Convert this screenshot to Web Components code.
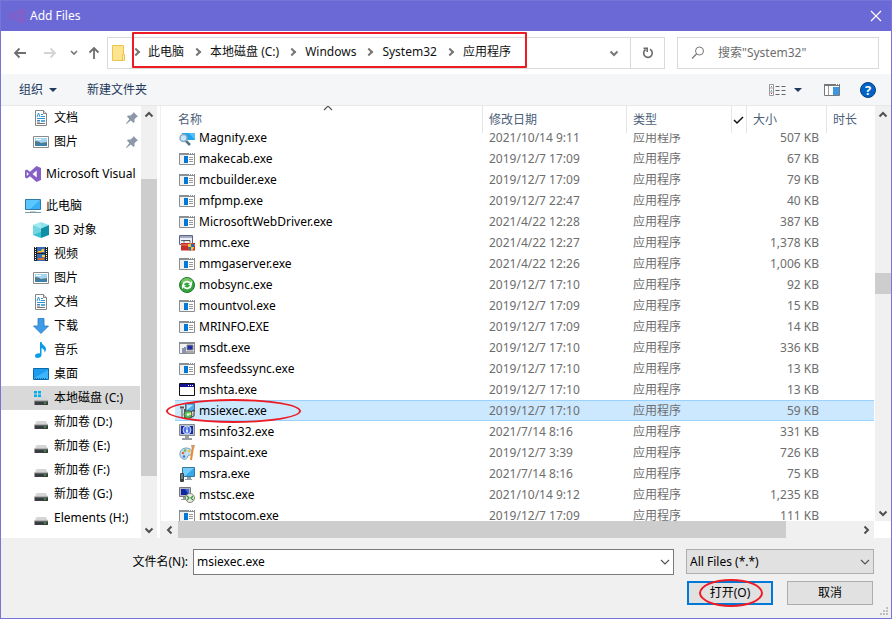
<!DOCTYPE html>
<html lang="zh-CN">
<head>
<meta charset="utf-8">
<title>Add Files</title>
<style>
  body {
    margin: 0;
    font: 12px/16px "Noto Sans", "Noto Sans CJK SC", sans-serif;
    color: #000;
  }
</style>
</head>
<body>
<file-dialog heading="Add Files">
  <address-bar slot="nav"></address-bar>
  <command-bar slot="commands"></command-bar>
  <folder-tree slot="tree"></folder-tree>
  <file-list slot="files"></file-list>
  <dialog-footer slot="footer"></dialog-footer>
</file-dialog>

<script>
const Colors = {
    accent: '#6b69d6',
    line: '#d9d9d9',
    marker: '#ed1c24',
    navy: '#1e395b',
    muted: '#6d6d6d',
};

const drive = `
  <path d="M3.500 7h9.500l2 4h-13.500z" fill="#d3d5d7"/>
  <path d="M1.500 11h13.500v4h-13.500z" fill="#3b3d40"/>
  <path d="M1.500 10.500h13.500v1h-13.500z" fill="#8b8d8f"/>
  <path d="M11 12.500h2v1h-2z" fill="#22e03a"/>`;

const monitor = `
  <path d="M.5 1.500h15v10H.5z" fill="#38b0f5" stroke="#2d7ba8"/>
  <path d="M1 2h14L5 11H1z" fill="#5cc6ff"/>`;

const Icons = {
    vs: '<path fill-rule="evenodd" fill="#865fc5" d="M11.500 0 16 2v12l-4.500 2L5 10.200 2 12.600 0 11.600V4.400l2-1 3 2.400zM11.700 4.600 7.500 8l4.200 3.400zM1.800 6v4l2.100-2z"/>',
    back: '<path d="M14 8H3M7.500 3.500 3 8l4.500 4.500" fill="none" stroke="#6e6e6e" stroke-width="1.800"/>',
    forward: '<path d="M2 8h11M8.500 3.500 13 8l-4.500 4.500" fill="none" stroke="#d4d4d4" stroke-width="1.800"/>',
    up: '<path d="M8 14V3M3.500 7.500 8 3l4.500 4.500" fill="none" stroke="#6e6e6e" stroke-width="1.800"/>',
    down: '<path d="M4.500 6.500 8 10l3.500-3.500" fill="none" stroke="currentColor" stroke-width="2"/>',
    small: '<path d="M5 6l3 3 3-3" fill="none" stroke="#777" stroke-width="1.600"/>',
    thin: '<path d="M4 6l4 4 4-4" fill="none" stroke="#555" stroke-width="1.200"/>',
    caret: '<path d="M4 6h8l-4 4z" fill="#1e395b"/>',
    close: '<path d="m3 3 10 10M13 3 3 13" stroke="#fff" stroke-width="1.200"/>',
    refresh: '<path d="M10 4.300A4.300 4.300 0 1 1 5.600 4.500M3.500 3.200h3.700v3.800" fill="none" stroke="#6b6b6b" stroke-width="1.600"/>',
    search: '<circle cx="9.500" cy="6" r="4" fill="none" stroke="#777"/><path d="M6.500 9 2 13.500" stroke="#777" stroke-width="1.200"/>',
    folder: '<path d="M2.500.5h11v15h-11z" fill="#ffe48f" stroke="#edc54c"/><path d="M12.500 9.500h2v6h-2z" fill="#fff0b8" stroke="#edc54c"/>',
    view: '<path d="M.5 2.500h4v11h-4zM.5 6h4M.5 10h4" fill="#fff" stroke="#999"/><path d="M6.500 4.500h4m2 0h4M6.500 8.500h4m2 0h4M6.500 12.500h4m2 0h4" stroke="#666"/><path d="M2 4h1v1H2zM2 8h1v1H2z" fill="#4b8fce"/><path d="M2 11h1v1H2z" fill="#d14"/>',
    pane: '<path d="M.5 2.500h15v11H.5z" fill="#fff" stroke="#777"/><path d="M0 2h16v2H0z" fill="#777"/><path d="M4.500 4v9" stroke="#999"/><path d="M9 5h6v8H9z" fill="#3c97e3"/><path d="M12 2h1v1h-1zM14 2h1v1h-1z" fill="#fff"/>',
    help: '<circle cx="8" cy="8" r="7.500" fill="#0063c6" stroke="#0a3f7d"/>',
    pin: '<path d="m9.500 2 4.500 4.500-1.200.5-2.300 2.300v2.700l-1 1-2.700-2.600L2.500 14l-.6-.6 3.500-4.200L3 6.500l1-1h2.700L9 3.200z" fill="#8c98a5"/>',
    check: '<path d="m2 8 3 3L11 5" fill="none" stroke="#111" stroke-width="1.500"/>',
    document: '<path d="M2.500.5h8l3 3v12h-11z" fill="#fff" stroke="#858585"/><path d="M10.500.5v3h3" fill="#ddd" stroke="#858585"/><path d="m4 7 1.500-4L7 7M8 4.500h2M8 6.500h4M4 8.500h8M4 10.500h3" stroke="#2b91d6" fill="none"/><path d="M8 10h4v2H8z" fill="#57a8dc"/><path d="M4 13.500h8M4 12h3" stroke="#777"/>',
    picture: '<path d="M.5 2.500h15v11H.5z" fill="#fff" stroke="#8b8b8b"/><path d="M2 4h12v8H2z" fill="#a5d4f4"/><path d="M2 7q4 0 6 2l6-1v4H2z" fill="#4e7b82"/><path d="M2 10q6-1 12 0v2H2z" fill="#3f7fae"/><path d="M3 5h5v1H3z" fill="#fff"/>',
    computer: monitor + '<path d="M5 13h6v1H5z" fill="#ccc"/><path d="M0 14.500h16" stroke="#7a9aab"/>',
    cube: '<path d="m8 0 8 3-8 3.500L0 3z" fill="#8de3ee"/><path d="m0 3 8 3.500V16l-8-3z" fill="#37bfd2"/><path d="M16 3 8 6.500V16l8-3z" fill="#0d8fa8"/><path d="m3 1.900 5-1.900v10l-8 3V3z" fill="#b7f1f5" opacity=".45"/>',
    video: '<path d="M1 1h14v14H1z" fill="#222"/><path d="M2.500 1v14M13.500 1v14" stroke="#fff" stroke-dasharray="1 1"/><path d="M4 1h8v6H4zM4 8h8v7H4z" fill="#356bbb"/><path d="M5 5h3l1-2h2v3H5z" fill="#f1cb39"/><path d="M4 6h4v1H4zM5 12h4l2-2v4H5z" fill="#d06d2f"/><path d="M9 9h3v2H9z" fill="#efd34d"/>',
    download: '<path d="M5 .5h6V8h4.500L8 15.500.5 8H5z" fill="#3d9be9" stroke="#2b78ba" stroke-width=".8"/>',
    music: '<path d="M7 0h1.500c.5 3 4.500 4 4.500 7 0 2-1 3-1.500 3.500C12 8 10.500 7 8.500 6v7c0 2-2 3-4 3S2 15 2 13.800C2 12 4.500 11 7 11.500z" fill="#0c9bea"/>',
    desktop: '<path d="M.5 2.500h15v11H.5z" fill="#1b9cf1" stroke="#086aa9"/><path d="m1 12 14-8v9H1z" fill="#3cb5fa"/><path d="M2 12.500h12" stroke="#086aa9" stroke-dasharray="1 1"/>',
    drive,
    system: drive + '<path d="M1 1h3v2.500H1zM5 1h3v2.500H5zM1 4.500h3V7H1zM5 4.500h3V7H5z" fill="#00adef"/>',
    exe: '<path d="M.5 2.500h15v11H.5z" fill="#f0f0f0" stroke="#8a8f94"/><path d="M0 2h16v2H0z" fill="#8a8f94"/><path d="M10 2.500h1m1 0h1m1 0h1" stroke="#fff"/><path d="M9 4h6v9H9z" fill="#fff"/><path d="M5 5h4v7H5z" fill="#0078d7"/><path d="M10 6.500h4M10 8.500h4M10 10.500h4" stroke="#999"/>',
    magnify: '<path d="M3 2h13v8H3z" fill="#22a1ec"/><path d="M16 2v8l-7-8z" fill="#57c2fa"/><path d="m6 10 5 5" stroke="#527489" stroke-width="2.500"/><circle cx="4.500" cy="8" r="3.500" fill="#c8e6f5" stroke="#8aabc0" stroke-width="1.500"/>',
    mmc: '<path d="M.5.5h13v9H.5z" fill="#eef0f7" stroke="#59658b"/><path d="M1 2h12M2 5.500h4" stroke="#59658b"/><path d="M5 7.500V5.500h6v2" fill="none" stroke="#555"/><path d="M2 8h14v7.500H2z" fill="#c92c24"/><path d="M2 10h14" stroke="#ef7d6b"/><path d="M9 9q3 0 3-1 0 1 3 1v4q-2 3-3 3-1 0-3-3z" fill="#f5c52d"/><path d="M12 8q0 1 3 1v3h-3zM9 12h3v4q-1 0-3-3z" fill="#2967b7"/>',
    sync: '<circle cx="8" cy="8" r="7.500" fill="#37a53f" stroke="#21762d"/><path d="M2 6a6 5 0 0 1 12 0" fill="#9bdb7d" opacity=".6"/><path d="M4 8a4 4 0 0 1 7-2M12 8a4 4 0 0 1-7 2" fill="none" stroke="#fff" stroke-width="1.800"/><path d="M13 4v4H9zM3 12V8h4z" fill="#fff"/>',
    msdt: '<path d="M.5 2.500h15v11H.5z" fill="#f3f3f3" stroke="#8a8f94"/><path d="M0 2h16v2H0z" fill="#8a8f94"/><path d="M8 5h6v5H8z" fill="#202da5" stroke="#888"/><path d="M7 11h8v2H7z" fill="#aaa"/><path d="M4 8v5m2-6v6" stroke="#67729a" stroke-width="1.500"/>',
    mshta: '<path d="M.5 1.500h15v12H.5z" fill="#fff" stroke="#111"/><path d="M1 2h14v3H1z" fill="#14148f"/><path d="M9 3.500h1m1 0h1m1 0h1" stroke="#fff"/>',
    installer: '<path d="M6.500.5h9v8h-9z" fill="#4ca9ec" stroke="#667"/><path d="M8 2h6L8 7z" fill="#b6e3ff"/><path d="M1 4.500h4M3 4v11M6 6v9" stroke="#555" stroke-width="2"/><path d="M3 5v9" stroke="#ddd"/><path d="m12 9 3-2v6l-4 2z" fill="#e7e7e7" stroke="#333"/><circle cx="9" cy="11.500" r="4" fill="#45c652" stroke="#555"/><path d="m9 11.500 3-2.500v3z" fill="#f7ed70"/><circle cx="9" cy="11.500" r="1.300" fill="#fff"/>',
    msinfo: '<path d="M.5.5h15v11H.5z" fill="#bdc1c8" stroke="#85898e"/><path d="M2 2h12v8H2z" fill="#1a2aac"/><circle cx="8" cy="6" r="4" fill="#5075dd" stroke="#cbd8ff"/><path d="M8 3.500v1m0 1v3" stroke="#fff" stroke-width="1.600"/><path d="M6 12h4v2H6zM3 14h10v2H3z" fill="#989da2"/>',
    paint: '<path d="M7 3c5 0 7 3 6 6-1 2-3 0-4 2-1 3-3 4-5 3C-1 12 0 3 7 3z" fill="#c4e1f1" stroke="#6da0bd"/><circle cx="4" cy="8" r="1.300" fill="#e6604d"/><circle cx="6" cy="5.500" r="1.300" fill="#67b553"/><circle cx="10" cy="6" r="1.300" fill="#f0bf3d"/><circle cx="5" cy="11.500" r="1.300" fill="#4971c6"/><path d="M14 2 12 15" stroke="#ef8b2b" stroke-width="2"/><path d="M12 0h4l-1 4h-2z" fill="#cc9a67"/>',
    assist: '<path d="M3.500 1.500h12v9h-12z" fill="#35a9ec" stroke="#39779a"/><path d="M4 2h11L6 10H4z" fill="#75cdfb"/><path d="M8 11h4v2H8zM6 13h7v1H6z" fill="#8ba1aa"/><rect x="1" y="7" width="4" height="9" rx="1" fill="#3a454b"/><path d="M3 8v5" stroke="#a8b3b8"/>',
    remote: '<path d="M.5.5h11v9H.5z" fill="#b2b6c0" stroke="#777"/><path d="M2 2h8v6H2z" fill="#10269a"/><path d="m6 2 4 0v6z" fill="#4069dd"/><path d="M4 10h4v2H4zM2 12h7v1H2z" fill="#999"/><circle cx="11" cy="11" r="4.500" fill="#e7ebdf" stroke="#858b7c"/><path d="m8 9 2 2-2 2m6-4-2 2 2 2" fill="none" stroke="#34953d" stroke-width="1.300"/>',
};

// Base for every element below: one open root, filled from a template
class BaseElement extends HTMLElement {
    constructor() {
        super();
        const template = document.createElement('template');
        template.innerHTML = `
          <style>
            * { box-sizing: border-box; }
            button, input, select { font: inherit; color: inherit; margin: 0; padding: 0; border: 0; background: none; }
            a { color: inherit; text-decoration: none; }
            ${this.styles()}
          </style>
          ${this.markup()}`;
        this._shadow = this.attachShadow({ mode: 'open' });
        this._shadow.appendChild(template.content.cloneNode(true));
    }
    styles() { return ''; }
    markup() { return ''; }
}

class UiIcon extends BaseElement {
    styles() {
        return `
          :host { display: block; flex: none; width: 16px; height: 16px; }
          svg { display: block; overflow: visible; }`;
    }
    connectedCallback() {
        const svg = `<svg width="16" height="16" viewBox="0 0 16 16" aria-hidden="true">${Icons[this.getAttribute('name')]}</svg>`;
        this._shadow.querySelector('svg')?.remove();
        this._shadow.querySelector('style').insertAdjacentHTML('afterend', svg);
    }
}

class ScrollBar extends BaseElement {
    styles() {
        return `
          :host { display: flex; flex-direction: column; background: #f0f0f0; color: #505050; }
          :host([horizontal]) { flex-direction: row; }
          button { flex: 0 0 17px; display: grid; place-items: center; }
          .before { flex: var(--before) 0 0; }
          .thumb { flex: var(--thumb) 0 0; background: #cdcdcd; }
          .after { flex: var(--after) 0 0; }
          .less { transform: rotate(180deg); }
          :host([horizontal]) .less { transform: rotate(90deg); }
          :host([horizontal]) .more { transform: rotate(-90deg); }`;
    }
    markup() {
        return `
          <button aria-label="Scroll back"><ui-icon class="less" name="down"></ui-icon></button>
          <div class="before"></div><div class="thumb"></div><div class="after"></div>
          <button aria-label="Scroll forward"><ui-icon class="more" name="down"></ui-icon></button>`;
    }
}

class FileDialog extends BaseElement {
    styles() {
        return `
          :host { display: flex; flex-direction: column; height: 100vh; box-sizing: border-box; border: 1px solid #7874d8; background: #fff; }
          header { flex: none; height: 30px; display: flex; align-items: center; gap: 5px; padding: 0 7px 0 8px; background: ${Colors.accent}; color: #fff; }
          h1 { flex: 1; margin: 0; font: inherit; }
          header > ui-icon { opacity: .8; }
          main { flex: 1; min-height: 0; display: grid; grid-template: minmax(0, 1fr) / 156px minmax(0, 1fr); column-gap: 3px; }`;
    }
    markup() {
        return `
          <header>
            <ui-icon name="vs"></ui-icon>
            <h1></h1>
            <button aria-label="Close"><ui-icon name="close"></ui-icon></button>
          </header>
          <slot name="nav"></slot>
          <slot name="commands"></slot>
          <main><slot name="tree"></slot><slot name="files"></slot></main>
          <slot name="footer"></slot>`;
    }
    connectedCallback() {
        this._shadow.querySelector('h1').textContent = this.getAttribute('heading');
    }
}

class AddressBar extends BaseElement {
    styles() {
        return `
          :host { display: flex; align-items: center; flex: none; height: 43px; padding: 0 12px 0 11px; box-sizing: border-box; color: #111; }
          .history { display: flex; align-items: center; flex: none; width: 95px; }
          .history button:nth-child(2) { margin-left: 14px; }
          .history button:nth-child(3) { margin-left: 8px; }
          .history button:nth-child(4) { margin-left: 4px; }
          .box { display: flex; height: 32px; border: 1px solid ${Colors.line}; }
          .path { flex: 556; align-items: center; min-width: 0; }
          .path > ui-icon { margin: 0 6px 0 2px; }
          ol { position: relative; align-self: flex-start; display: flex; align-items: center; height: 28px; margin: 0; padding: 0 16px 0 1px; list-style: none; white-space: nowrap; }
          ol::after { content: ''; position: absolute; inset: -6px 0 -2px; border: 2px solid ${Colors.marker}; border-radius: 1px; pointer-events: none; }
          li { display: flex; align-items: center; }
          li::before { content: ''; width: 4px; height: 4px; margin-right: 9px; border: solid #777; border-width: 2px 2px 0 0; transform: rotate(45deg); }
          li + li::before { margin: 0 10px; }
          .drop { margin-left: auto; width: 32px; }
          .drop, .reload { display: grid; place-items: center; color: #777; }
          .reload { width: 34px; height: 30px; border-left: 1px solid ${Colors.line}; }
          .search { flex: 188; align-items: center; gap: 12px; margin-left: 12px; padding-left: 12px; min-width: 0; color: ${Colors.muted}; }
          input { flex: 1; min-width: 0; outline: 0; }
          input::placeholder { color: ${Colors.muted}; opacity: 1; }`;
    }
    markup() {
        const crumbs = ['此电脑', '本地磁盘 (C:)', 'Windows', 'System32', '应用程序'];
        return `
          <div class="history">
            <button aria-label="Back"><ui-icon name="back"></ui-icon></button>
            <button aria-label="Forward"><ui-icon name="forward"></ui-icon></button>
            <button aria-label="Recent"><ui-icon name="small"></ui-icon></button>
            <button aria-label="Up"><ui-icon name="up"></ui-icon></button>
          </div>
          <nav class="box path" aria-label="Path">
            <ui-icon name="folder"></ui-icon>
            <ol>${crumbs.map((crumb) => `<li><a href="#">${crumb}</a></li>`).join('')}</ol>
            <button class="drop" aria-label="Previous locations"><ui-icon name="down"></ui-icon></button>
            <button class="reload" aria-label="Refresh"><ui-icon name="refresh"></ui-icon></button>
          </nav>
          <div class="box search">
            <ui-icon name="search"></ui-icon>
            <input type="text" aria-label="Search" placeholder='搜索"System32"'>
          </div>`;
    }
}

class CommandBar extends BaseElement {
    styles() {
        return `
          :host { display: flex; align-items: center; flex: none; height: 32px; box-sizing: border-box; padding: 0 15px 0 18px; background: #f4f6f8; border-bottom: 1px solid #e6e8ea; color: ${Colors.navy}; }
          button { display: flex; align-items: center; }
          .organize { gap: 2px; margin-right: 26px; }
          .view { margin-left: auto; gap: 5px; margin-right: 18px; }
          .pane { margin-right: 20px; }
          .help { display: grid; place-items: center; color: #fff; font: bold 13px/16px "Noto Sans", sans-serif; }
          .help > * { grid-area: 1 / 1; z-index: 0; }`;
    }
    markup() {
        return `
          <button class="organize">组织<ui-icon name="caret"></ui-icon></button>
          <button>新建文件夹</button>
          <button class="view" aria-label="Change view"><ui-icon name="view"></ui-icon><ui-icon name="caret"></ui-icon></button>
          <button class="pane" aria-label="Preview pane"><ui-icon name="pane"></ui-icon></button>
          <button class="help" aria-label="Help"><ui-icon name="help"></ui-icon><span>?</span></button>`;
    }
}

class FolderTree extends BaseElement {
    styles() {
        return `
          :host { display: grid; grid-template-columns: 1fr 16px; min-height: 0; min-width: 0; }
          ul { margin: 0; padding: 0; list-style: none; overflow: hidden; }
          a { display: flex; align-items: center; gap: 5px; height: 24px; padding-left: 32px; white-space: nowrap; }
          .root { margin-top: 8px; }
          .root a { padding-left: 24px; }
          a[aria-current] { background: #d9d9d9; margin-right: 1px; }
          .pin { margin-left: auto; margin-right: 1px; }
          scroll-bar { --before: 56; --thumb: 297; --after: 45; }`;
    }
    markup() {
        const items = [
            ['document', '文档', 'pinned'],
            ['picture', '图片', 'pinned'],
            ['vs', 'Microsoft Visual', 'root'],
            ['computer', '此电脑', 'root'],
            ['cube', '3D 对象'],
            ['video', '视频'],
            ['picture', '图片'],
            ['document', '文档'],
            ['download', '下载'],
            ['music', '音乐'],
            ['desktop', '桌面'],
            ['system', '本地磁盘 (C:)', 'current'],
            ['drive', '新加卷 (D:)'],
            ['drive', '新加卷 (E:)'],
            ['drive', '新加卷 (F:)'],
            ['drive', '新加卷 (G:)'],
            ['drive', 'Elements (H:)'],
        ];
        const rows = items.map(([icon, label, state]) => `
          <li class="${state || ''}">
            <a href="#" ${state === 'current' ? 'aria-current="true"' : ''}>
              <ui-icon name="${icon}"></ui-icon><span>${label}</span>
              ${state === 'pinned' ? '<ui-icon class="pin" name="pin"></ui-icon>' : ''}
            </a>
          </li>`);
        return `<ul>${rows.join('')}</ul><scroll-bar></scroll-bar>`;
    }
}

class FileList extends BaseElement {
    styles() {
        return `
          :host { display: grid; grid-template: minmax(0, 1fr) 17px / minmax(0, 1fr) 16px; column-gap: 1px; min-height: 0; border-left: 1px solid #f0f0f0; }
          .view { overflow: hidden; padding-left: 14px; }
          table { width: 100%; table-layout: fixed; border-spacing: 0; color: ${Colors.muted}; }
          .date { width: 144px; } .type { width: 105px; } .tick { width: 15px; } .size { width: 80px; } .length { width: 48px; }
          th { position: sticky; top: 0; z-index: 1; height: 27px; padding: 0 0 0 6px; background: #fff; border-left: 1px solid #e5e5e5; color: #4c607a; font-weight: normal; text-align: left; }
          th:first-child { border: 0; padding-left: 3px; }
          th:nth-child(4) { padding: 0; }
          th:nth-child(4) ui-icon { width: 14px; }
          .sort { position: absolute; top: -6px; left: 50%; margin-left: -9px; transform: rotate(180deg); }
          td { height: 21px; padding: 0 0 0 7px; white-space: nowrap; }
          td:first-child { position: relative; padding-left: 4px; color: #000; }
          td:nth-child(5) { padding-right: 7px; text-align: right; }
          .name { display: flex; align-items: center; gap: 4px; }
          tr[aria-selected] td { background: #cce8ff; box-shadow: inset 0 1px #99d1ff, inset 0 -1px #99d1ff; }
          .ring { position: absolute; inset: -1px auto -2px -9px; width: 135px; border: 2px solid ${Colors.marker}; border-radius: 50%; }
          .vertical { --before: 150; --thumb: 21; --after: 210; }
          .horizontal { --before: 0; --thumb: 608; --after: 71; }`;
    }
    markup() {
        const files = [
            ['magnify', 'Magnify.exe', '2021/10/14 9:11', '507'],
            ['exe', 'makecab.exe', '2019/12/7 17:09', '67'],
            ['exe', 'mcbuilder.exe', '2019/12/7 17:09', '79'],
            ['exe', 'mfpmp.exe', '2019/12/7 22:47', '40'],
            ['exe', 'MicrosoftWebDriver.exe', '2021/4/22 12:28', '387'],
            ['mmc', 'mmc.exe', '2021/4/22 12:27', '1,378'],
            ['exe', 'mmgaserver.exe', '2021/4/22 12:26', '1,006'],
            ['sync', 'mobsync.exe', '2019/12/7 17:10', '92'],
            ['exe', 'mountvol.exe', '2019/12/7 17:09', '15'],
            ['exe', 'MRINFO.EXE', '2019/12/7 17:09', '14'],
            ['msdt', 'msdt.exe', '2019/12/7 17:10', '336'],
            ['exe', 'msfeedssync.exe', '2019/12/7 17:10', '13'],
            ['mshta', 'mshta.exe', '2019/12/7 17:10', '13'],
            ['installer', 'msiexec.exe', '2019/12/7 17:10', '59', true],
            ['msinfo', 'msinfo32.exe', '2021/7/14 8:16', '331'],
            ['paint', 'mspaint.exe', '2019/12/7 3:39', '726'],
            ['assist', 'msra.exe', '2021/7/14 8:16', '75'],
            ['remote', 'mstsc.exe', '2021/10/14 9:12', '1,235'],
            ['exe', 'mtstocom.exe', '2019/12/7 17:09', '111'],
        ];
        const rows = files.map(([icon, name, date, size, selected]) => `
          <tr ${selected ? 'aria-selected="true"' : ''}>
            <td><div class="name"><ui-icon name="${icon}"></ui-icon>${name}</div>${selected ? '<span class="ring"></span>' : ''}</td>
            <td>${date}</td><td>应用程序</td><td></td><td>${size} KB</td><td></td>
          </tr>`);
        return `
          <div class="view">
            <table>
              <colgroup><col><col class="date"><col class="type"><col class="tick"><col class="size"><col class="length"></colgroup>
              <thead><tr>
                <th>名称<ui-icon class="sort" name="thin"></ui-icon></th>
                <th>修改日期</th><th>类型</th><th aria-label="Selected"><ui-icon name="check"></ui-icon></th><th>大小</th><th>时长</th>
              </tr></thead>
              <tbody>${rows.join('')}</tbody>
            </table>
          </div>
          <scroll-bar class="vertical"></scroll-bar>
          <scroll-bar class="horizontal" horizontal></scroll-bar>`;
    }
    connectedCallback() {
        // first row sits partly under the sticky header
        this._shadow.querySelector('.view').scrollTop = 6;
    }
}

class DialogFooter extends BaseElement {
    styles() {
        return `
          :host { display: grid; grid-template: 26px 24px / 187px minmax(0, 1fr) 188px; gap: 6px 0; flex: none; position: relative; height: 80px; box-sizing: border-box; padding: 11px 17px 0 0; background: #f0f0f0; }
          label { align-self: center; text-align: right; }
          .combo, .filter { display: flex; align-items: center; }
          .combo { margin: 0 12px 0 5px; background: #fff; border: 1px solid #7a7a7a; }
          input { flex: 1; min-width: 0; padding-left: 3px; outline: 0; }
          .filter { display: grid; grid-template-columns: 1fr 16px; height: 25px; border: 1px solid #adadad; background: #e1e1e1; }
          select { grid-area: 1 / 1 / 2 / 3; height: 23px; padding-left: 3px; appearance: none; outline: 0; }
          .filter ui-icon { grid-area: 1 / 2; pointer-events: none; }
          .actions { grid-column: 3; display: flex; justify-content: space-between; padding: 0 1px; }
          .actions button { position: relative; width: 86px; background: #e1e1e1; border: 1px solid #adadad; }
          .actions .open { border: 2px solid #0078d7; }
          .ring { position: absolute; inset: -4px 8px -4px 10px; border: 2px solid ${Colors.marker}; border-radius: 50%; }
          .grip { position: absolute; right: 2px; bottom: 2px; width: 9px; height: 9px; }`;
    }
    markup() {
        return `
          <label for="filename">文件名(N):</label>
          <div class="combo">
            <input id="filename" type="text" value="msiexec.exe">
            <button aria-label="Recent names"><ui-icon name="thin"></ui-icon></button>
          </div>
          <div class="filter">
            <select aria-label="File type"><option>All Files (*.*)</option></select>
            <ui-icon name="thin"></ui-icon>
          </div>
          <div class="actions">
            <button class="open">打开(O)<span class="ring"></span></button>
            <button>取消</button>
          </div>
          <svg class="grip" viewBox="0 0 9 9"><path d="M6 0h2v2H6zM3 3h2v2H3zM6 3h2v2H6zM0 6h2v2H0zM3 6h2v2H3zM6 6h2v2H6z" fill="#bfbfbf"/></svg>`;
    }
}

// the dialog and its bars come first, so the list has its height when it scrolls
window.customElements.define('ui-icon', UiIcon);
window.customElements.define('scroll-bar', ScrollBar);
window.customElements.define('file-dialog', FileDialog);
window.customElements.define('address-bar', AddressBar);
window.customElements.define('command-bar', CommandBar);
window.customElements.define('folder-tree', FolderTree);
window.customElements.define('dialog-footer', DialogFooter);
window.customElements.define('file-list', FileList);
</script>
</body>
</html>
